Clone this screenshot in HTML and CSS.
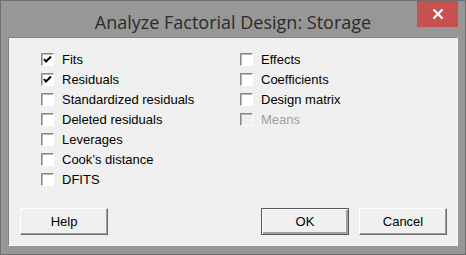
FILE: index.html
```html
<!DOCTYPE html>
<html>
  <head>
    <title>Analyze Factorial Design: Storage</title>
    <meta charset="UTF-8" />
    <link rel="stylesheet" href="styles.css">
  </head>
  <body>
    <div class="window">
      <div class="titlebar">
        <span class="title">Analyze Factorial Design: Storage</span>
        <div class="close">
          <svg width="12" height="10" viewBox="0 0 12 10">
            <path d="M1.5 0.5 L10.5 9.5 M10.5 0.5 L1.5 9.5" stroke="#fff" stroke-width="2.2" />
          </svg>
        </div>
      </div>

      <div class="content">
        <div class="options">
          <div class="column">
            <label class="check checked"><span class="box"></span>Fits</label>
            <label class="check checked"><span class="box"></span>Residuals</label>
            <label class="check"><span class="box"></span>Standardized residuals</label>
            <label class="check"><span class="box"></span>Deleted residuals</label>
            <label class="check"><span class="box"></span>Leverages</label>
            <label class="check"><span class="box"></span>Cook’s distance</label>
            <label class="check"><span class="box"></span>DFITS</label>
          </div>
          <div class="column">
            <label class="check"><span class="box"></span>Effects</label>
            <label class="check"><span class="box"></span>Coefficients</label>
            <label class="check"><span class="box"></span>Design matrix</label>
            <label class="check disabled"><span class="box"></span>Means</label>
          </div>
        </div>

        <div class="buttons">
          <button class="btn">Help</button>
          <span class="spacer"></span>
          <button class="btn default">OK</button>
          <button class="btn">Cancel</button>
        </div>
      </div>
    </div>
  </body>
</html>
```

FILE: styles.css
```css
body {
  margin: 0;
  font-family: "Liberation Sans", Arial, sans-serif;
}

.window {
  width: 464px;
  height: 253px;
  border: 1px solid #6e6e6e;
  background-color: #979797;
  display: flex;
  flex-direction: column;
}

.titlebar {
  position: relative;
  height: 36px;
  display: flex;
  align-items: center;
  justify-content: center;
}

.title {
  font-family: "Open Sans", "Noto Sans", sans-serif;
  font-size: 18px;
  color: #2b2b2b;
  margin-top: 6px;
}

.close {
  position: absolute;
  top: 0;
  right: 7px;
  width: 41px;
  height: 26px;
  background-color: #c75050;
  display: flex;
  align-items: center;
  justify-content: center;
}

.content {
  flex: 1;
  margin: 0 7px 8px 7px;
  border-top: 1px solid #828282;
  border-left: 1px solid #828282;
  border-right: 1px solid #f8f8f8;
  border-bottom: 1px solid #f8f8f8;
  background-color: #f0f0f0;
  display: flex;
  flex-direction: column;
}

.options {
  display: grid;
  grid-template-columns: 199px 1fr;
  padding: 15px 0 0 32px;
}

.column {
  display: flex;
  flex-direction: column;
}

.check {
  height: 20px;
  display: flex;
  align-items: flex-start;
  font-size: 13px;
  line-height: 14px;
  color: #000;
}

.box {
  width: 11px;
  height: 11px;
  margin-right: 8px;
  border-top: 1px solid #8a8a8a;
  border-left: 1px solid #8a8a8a;
  border-right: 1px solid #fff;
  border-bottom: 1px solid #fff;
  box-shadow: inset 1px 1px 0 #b8b8b8;
  background-color: #fff;
  flex: none;
}

.checked .box {
  background-image: url("data:image/svg+xml,%3Csvg xmlns='http://www.w3.org/2000/svg' width='11' height='11'%3E%3Cpath d='M2 5 L4 7.5 L9 2.5' fill='none' stroke='%23000' stroke-width='2'/%3E%3C/svg%3E");
}

.disabled {
  color: #a0a0a0;
}

.disabled .box {
  background-color: #f0f0f0;
}

.buttons {
  margin-top: auto;
  display: flex;
  gap: 10px;
  padding: 0 10px 10px 11px;
}

.spacer {
  flex: 1;
}

.btn {
  width: 88px;
  height: 27px;
  padding: 0;
  font-family: "Liberation Sans", Arial, sans-serif;
  font-size: 13px;
  color: #000;
  background-color: #f0f0f0;
  border-top: 1px solid #fff;
  border-left: 1px solid #fff;
  border-right: 1px solid #6a6a6a;
  border-bottom: 1px solid #6a6a6a;
  box-shadow: inset -1px -1px 0 #a0a0a0;
}

.btn.default {
  outline: 1px solid #5a5a5a;
  outline-offset: -1px;
  box-shadow: inset 1px 1px 0 #fff, inset -2px -2px 0 #a0a0a0;
}
```
